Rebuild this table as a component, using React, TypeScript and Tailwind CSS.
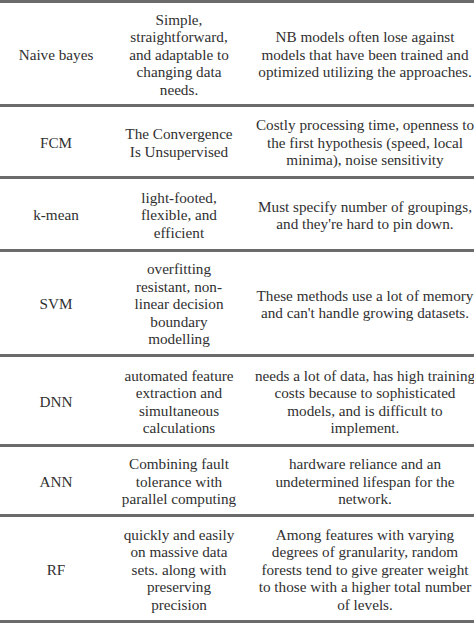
const rows: { name: string; pros: string[]; cons: string[]; h: string }[] = [
  {
    name: "Naive bayes",
    pros: ["Simple,", "straightforward,", "and adaptable to", "changing data", "needs."],
    cons: [
      "NB models often lose against",
      "models that have been trained and",
      "optimized utilizing the approaches.",
    ],
    h: "h-[104px]",
  },
  {
    name: "FCM",
    pros: ["The Convergence", "Is Unsupervised"],
    cons: [
      "Costly processing time, openness to",
      "the first hypothesis (speed, local",
      "minima), noise sensitivity",
    ],
    h: "h-[72px]",
  },
  {
    name: "k-mean",
    pros: ["light-footed,", "flexible, and", "efficient"],
    cons: ["Must specify number of groupings,", "and they're hard to pin down."],
    h: "h-[73px]",
  },
  {
    name: "SVM",
    pros: ["overfitting", "resistant, non-", "linear decision", "boundary", "modelling"],
    cons: ["These methods use a lot of memory", "and can't handle growing datasets."],
    h: "h-[105px]",
  },
  {
    name: "DNN",
    pros: ["automated feature", "extraction and", "simultaneous", "calculations"],
    cons: [
      "needs a lot of data, has high training",
      "costs because to sophisticated",
      "models, and is difficult to",
      "implement.",
    ],
    h: "h-[90px]",
  },
  {
    name: "ANN",
    pros: ["Combining fault", "tolerance with", "parallel computing"],
    cons: ["hardware reliance and an", "undetermined lifespan for the", "network."],
    h: "h-[70px]",
  },
  {
    name: "RF",
    pros: ["quickly and easily", "on massive data", "sets. along with", "preserving", "precision"],
    cons: [
      "Among features with varying",
      "degrees of granularity, random",
      "forests tend to give greater weight",
      "to those with a higher total number",
      "of levels.",
    ],
    h: "h-[106px]",
  },
];

const Cell = ({ lines }: { lines: string[] }) => (
  <div className="flex flex-col items-center justify-center pt-[2px] text-center whitespace-nowrap">
    {lines.map((l, i) => (
      <span key={i}>{l}</span>
    ))}
  </div>
);

export default function App() {
  return (
    <div className="w-[474px] h-[625px] overflow-hidden bg-white">
      <div className="w-[484px] border-t-[3px] border-[#6b6b6b] font-['Liberation_Serif','Times_New_Roman',serif] text-[15.2px] leading-[17.5px] text-[#303030]">
        {rows.map((r) => (
          <div
            key={r.name}
            className={`grid grid-cols-[112px_134px_238px] border-b-[3px] border-[#6b6b6b] ${r.h}`}
          >
            <Cell lines={[r.name]} />
            <Cell lines={r.pros} />
            <Cell lines={r.cons} />
          </div>
        ))}
      </div>
    </div>
  );
}
